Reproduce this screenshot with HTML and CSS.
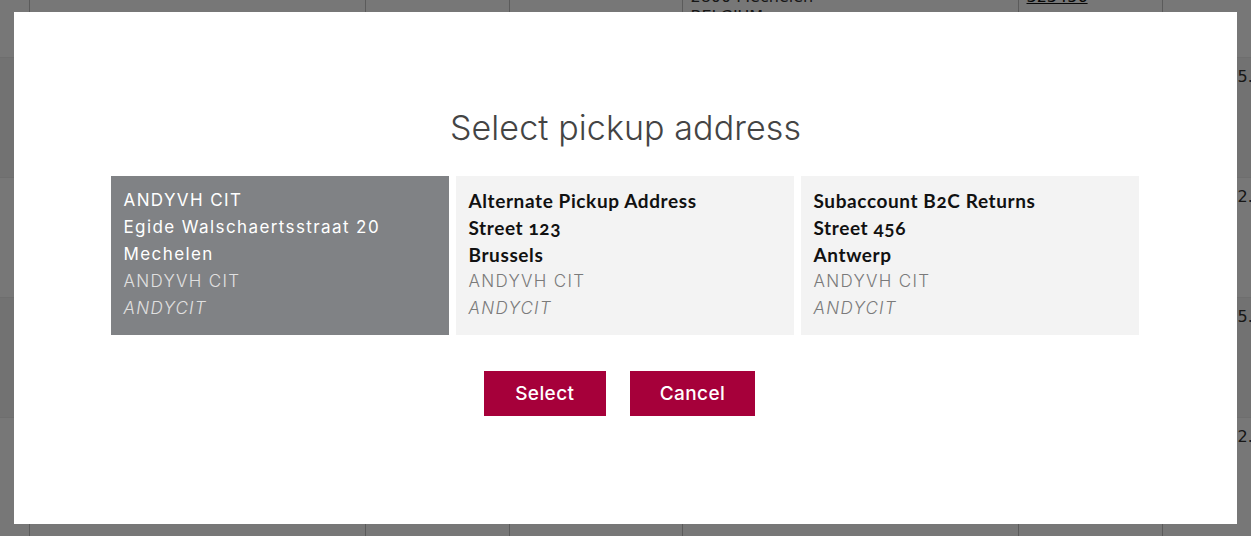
FILE: index.html
```html
<!DOCTYPE html>
<html lang="en">
<head>
<meta charset="utf-8">
<title>Select pickup address</title>
<link rel="stylesheet" href="styles.css">
</head>
<body>
<div class="page">
  <table class="orders">
    <colgroup>
      <col class="c0"><col class="c1"><col class="c2"><col class="c3"><col class="c4"><col class="c5"><col class="c6">
    </colgroup>
    <tbody>
      <tr>
        <td></td><td></td><td></td><td></td>
        <td>ANDYVH CIT<br>Egide Walschaertsstraat 20<br>2800 Mechelen<br>BELGIUM</td>
        <td><br><br><a href="#">323456</a></td>
        <td class="amount"></td>
      </tr>
      <tr>
        <td></td><td></td><td></td><td></td><td></td><td></td>
        <td class="amount">5.</td>
      </tr>
      <tr>
        <td></td><td></td><td></td><td></td><td></td><td></td>
        <td class="amount">2.</td>
      </tr>
      <tr>
        <td></td><td></td><td></td><td></td><td></td><td></td>
        <td class="amount">5.</td>
      </tr>
      <tr>
        <td></td><td></td><td></td><td></td><td></td><td></td>
        <td class="amount">2.</td>
      </tr>
    </tbody>
  </table>
</div>

<div class="overlay"></div>

<div class="modal" role="dialog" aria-labelledby="modal-title">
  <h2 class="modal-title" id="modal-title">Select pickup address</h2>
  <div class="address-list">
    <div class="address is-selected">
      <div class="line main">ANDYVH CIT</div>
      <div class="line main">Egide Walschaertsstraat 20</div>
      <div class="line main">Mechelen</div>
      <div class="line meta">ANDYVH CIT</div>
      <div class="line meta code">ANDYCIT</div>
    </div>
    <div class="address">
      <div class="line strong">Alternate Pickup Address</div>
      <div class="line strong">Street 123</div>
      <div class="line strong">Brussels</div>
      <div class="line meta">ANDYVH CIT</div>
      <div class="line meta code">ANDYCIT</div>
    </div>
    <div class="address">
      <div class="line strong">Subaccount B2C Returns</div>
      <div class="line strong">Street 456</div>
      <div class="line strong">Antwerp</div>
      <div class="line meta">ANDYVH CIT</div>
      <div class="line meta code">ANDYCIT</div>
    </div>
  </div>
  <div class="actions">
    <button class="btn" type="button">Select</button>
    <button class="btn" type="button">Cancel</button>
  </div>
</div>
</body>
</html>
```

FILE: styles.css
```css
html, body {
  margin: 0;
  padding: 0;
  height: 100%;
  overflow: hidden;
}

body {
  font-family: "DejaVu Sans", sans-serif;
  background: #ffffff;
}

/* ---------- page behind the dialog ---------- */
.page {
  margin-top: -63px;
}

.orders {
  border-collapse: collapse;
  table-layout: fixed;
  width: 1251px;
  font-size: 16px;
  line-height: 20px;
  color: #333;
}

.orders .c0 { width: 29px; }
.orders .c1 { width: 336px; }
.orders .c2 { width: 144px; }
.orders .c3 { width: 173px; }
.orders .c4 { width: 336px; }
.orders .c5 { width: 144px; }
.orders .c6 { width: 89px; }

.orders td {
  height: 120px;
  box-sizing: border-box;
  padding: 9px 8px;
  vertical-align: top;
  border-left: 1px solid #c4c4c4;
  border-top: 1px solid #ececec;
  white-space: nowrap;
  overflow: hidden;
}

.orders td:first-child {
  border-left: none;
}

.orders tr:nth-child(even) td {
  background: #f4f4f4;
}

.orders a {
  color: #111;
}

.orders .amount {
  padding-left: 75px;
  padding-right: 0;
}

/* ---------- overlay ---------- */
.overlay {
  position: fixed;
  inset: 0;
  background: rgba(0, 0, 0, 0.533);
}

/* ---------- dialog ---------- */
.modal {
  position: fixed;
  top: 12px;
  left: 14px;
  right: 14px;
  bottom: 12px;
  background: #ffffff;
  display: flex;
  flex-direction: column;
  align-items: center;
  padding-top: 96px;
  box-sizing: border-box;
  font-family: Inter, "Noto Sans", sans-serif;
}

.modal-title {
  margin: 0;
  font-size: 34px;
  line-height: 40px;
  font-weight: 300;
  color: #444;
  letter-spacing: 0.1px;
}

.address-list {
  display: flex;
  gap: 7px;
  margin-top: 28px;
  margin-right: 2px;
}

.address {
  width: 338px;
  box-sizing: border-box;
  padding: 11px 13px 13px;
  background: #f3f3f3;
  color: #111;
}

.address.is-selected {
  background: #808285;
}

.line {
  font-size: 17px;
  line-height: 27px;
  white-space: nowrap;
}

.line.main {
  color: #ffffff;
  font-weight: 400;
  letter-spacing: 1.4px;
}

.line.strong {
  font-family: Lato, "Noto Sans", sans-serif;
  font-weight: 700;
  font-size: 19px;
  letter-spacing: 0.6px;
  color: #111;
  font-variant-numeric: oldstyle-nums;
}

.line.meta {
  color: #7a7a7a;
  font-weight: 300;
  letter-spacing: 1.3px;
}

.line.code {
  font-style: italic;
}

.address.is-selected .line.meta {
  color: #e0e0e0;
}

.actions {
  display: flex;
  gap: 24px;
  margin-top: 36px;
  margin-right: 12px;
}

.btn {
  min-width: 122px;
  height: 45px;
  padding: 0 30px;
  border: none;
  border-radius: 0;
  background: #a6003a;
  color: #ffffff;
  font-family: Inter, "Noto Sans", sans-serif;
  font-size: 19px;
  font-weight: 500;
  letter-spacing: 0.4px;
  cursor: pointer;
}
```
